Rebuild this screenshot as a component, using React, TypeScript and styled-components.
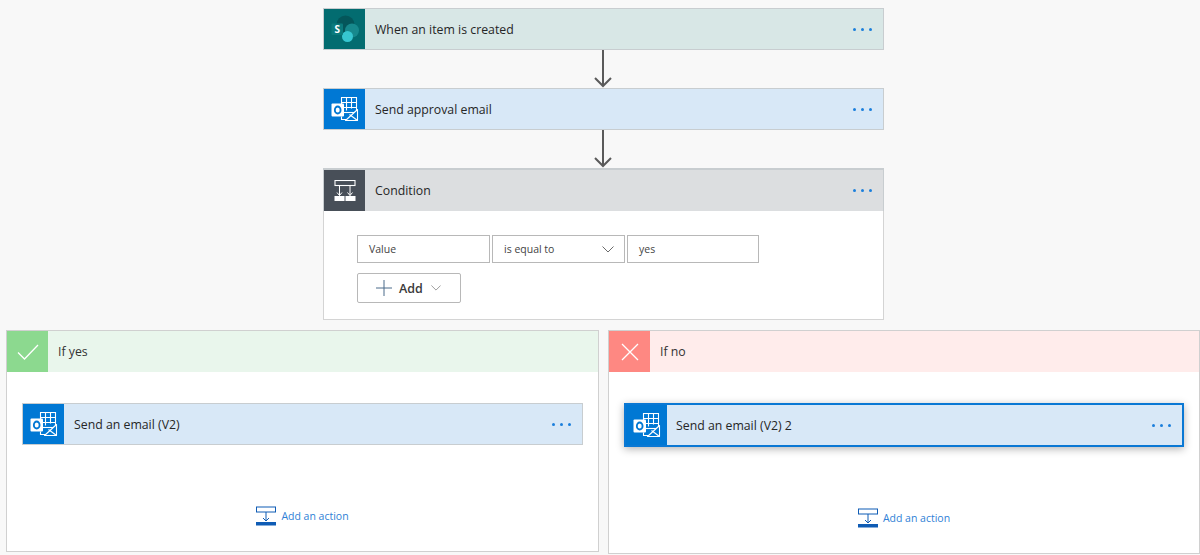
import type { ReactNode } from 'react';
import { createGlobalStyle, styled } from 'styled-components';

const GlobalStyle = createGlobalStyle`
  html, body {
    margin: 0;
    padding: 0;
    background: #f8f8f8;
    font-family: "Open Sans", "Noto Sans", sans-serif;
  }
`;

const Page = styled.div`
  width: 1200px;
  height: 555px;
  overflow: hidden;
  padding: 8px 0 0 6px;
  box-sizing: border-box;
`;

const Flow = styled.div`
  width: 561px;
  margin-left: 317px;
`;

const ArrowRow = styled.div`
  height: 38px;
  display: flex;
  justify-content: center;
`;

const CardBox = styled.div<{ $tint: string; $selected?: boolean; $tall?: boolean }>`
  display: flex;
  align-items: stretch;
  height: ${(p) => (p.$selected ? 44 : p.$tall ? 43 : 42)}px;
  box-sizing: border-box;
  background: ${(p) => p.$tint};
  border: ${(p) => (p.$selected ? '2px solid #0a78d4' : '1px solid #c8cdd0')};
  border-top-width: ${(p) => (p.$selected || p.$tall ? 2 : 1)}px;
  border-bottom-width: ${(p) => (p.$tall ? 0 : p.$selected ? 2 : 1)}px;
  box-shadow: ${(p) => (p.$selected ? '0 2px 8px rgba(0, 0, 0, 0.3)' : 'none')};
`;

const CardIcon = styled.div<{ $bg: string }>`
  width: 41px;
  flex: none;
  display: flex;
  align-items: center;
  justify-content: center;
  background: ${(p) => p.$bg};
`;

const CardTitle = styled.div<{ $selected?: boolean }>`
  flex: 1;
  display: flex;
  align-items: center;
  padding-left: ${(p) => (p.$selected ? 9 : 10)}px;
  font-size: 12.3px;
  color: #262626;
`;

const Dots = styled.div`
  display: flex;
  align-items: center;
  gap: 5px;
  padding-right: 11px;
  i {
    width: 3px;
    height: 3px;
    background: #1b7fdc;
    border-radius: 50%;
  }
`;

const ConditionBody = styled.div`
  height: 109px;
  box-sizing: border-box;
  padding: 24px 33px 0;
  background: #fff;
  border: 1px solid #d4d4d4;
  border-top: none;
`;

const Fields = styled.div`
  display: flex;
  gap: 2px;
`;

const Field = styled.div<{ $raised?: boolean }>`
  width: 133px;
  height: 28px;
  box-sizing: border-box;
  border: 1px solid #b8b8b8;
  background: #fff;
  display: flex;
  align-items: center;
  justify-content: space-between;
  padding: 0 10px ${(p) => (p.$raised ? 1 : 0)}px 11px;
  font-size: 10.5px;
  color: #444;
  &:last-child {
    width: 132px;
  }
`;

const AddButton = styled.div`
  width: 104px;
  height: 30px;
  margin-top: 10px;
  box-sizing: border-box;
  border: 1px solid #b8b8b8;
  border-radius: 2px;
  display: flex;
  align-items: center;
  gap: 7px;
  padding-left: 18px;
  font-size: 12.5px;
  font-weight: 600;
  color: #3a3a3a;
  svg:last-child {
    margin-left: 1px;
  }
`;

const Branches = styled.div`
  display: flex;
  align-items: flex-start;
  gap: 9px;
  margin-top: 10px;
`;

const Branch = styled.div<{ $width: number; $height: number }>`
  width: ${(p) => p.$width}px;
  height: ${(p) => p.$height}px;
  box-sizing: border-box;
  background: #fff;
  border: 1px solid #d0d0d0;
`;

const BranchHead = styled.div<{ $tint: string }>`
  display: flex;
  height: 41px;
  background: ${(p) => p.$tint};
`;

const BranchIcon = styled.div<{ $bg: string }>`
  width: 41px;
  display: flex;
  align-items: center;
  justify-content: center;
  background: ${(p) => p.$bg};
`;

const BranchTitle = styled.div`
  display: flex;
  align-items: center;
  padding-left: 10px;
  font-size: 12.3px;
  color: #333;
`;

const BranchBody = styled.div`
  padding: 31px 15px 0;
`;

const AddActionLink = styled.div`
  display: flex;
  align-items: center;
  justify-content: center;
  gap: 5px;
  margin-top: 61px;
  font-size: 10.5px;
  color: #2f7fd6;
`;

const OutlookIcon = () => (
  <svg width="28" height="24" viewBox="0 0 28 24" fill="none" stroke="#fff" strokeWidth="1.1">
    <rect x="10.5" y="0.5" width="15" height="15" />
    <path d="M15.5 0.5v13M20.5 0.5v11M10.5 5.5h15M12.5 10.5h13M10.500 19.500v3h5" />
    <path d="M14.500 23.500h12V12.500l-6.500 6z" strokeLinejoin="round" fill="#0078d4" />
    <path d="M18.500 17.500l8 6" />
    <rect x="0.500" y="6.500" width="12.500" height="13" rx="1" fill="#fff" stroke="none" />
    <ellipse cx="6.700" cy="13" rx="2.900" ry="3.500" stroke="#0078d4" strokeWidth="1.800" />
  </svg>
);

const SharePointIcon = () => (
  <svg width="28" height="28" viewBox="0 0 28 28">
    <circle cx="14.500" cy="9.500" r="9" fill="#04565a" />
    <circle cx="21" cy="15.500" r="7" fill="#17898d" />
    <circle cx="16.500" cy="21.500" r="5.500" fill="#37c6d0" />
    <rect x="0.500" y="8.500" width="11.500" height="11.500" rx="1" fill="#0b7a7c" />
    <text x="6.300" y="18" textAnchor="middle" fill="#fff" fontSize="10" fontWeight="700" fontFamily="Open Sans, sans-serif">
      S
    </text>
  </svg>
);

const ConditionIcon = () => (
  <svg width="22" height="22" viewBox="0 0 22 22" fill="none" stroke="#fff">
    <rect x="1" y="0.500" width="20" height="5" strokeWidth="1.100" />
    <path d="M5.500 5.500v10M16 5.500v10M3 12.500l2.500 3 2.500-3M13.500 12.500l2.500 3 2.500-3" strokeWidth="1" />
    <rect x="0.500" y="16" width="10" height="5" fill="#fff" stroke="none" />
    <rect x="11.500" y="16" width="10" height="5" fill="#fff" stroke="none" />
  </svg>
);

const ArrowIcon = () => (
  <svg width="20" height="38" viewBox="0 0 20 38" fill="none" stroke="#5a5a5a">
    <path d="M9 0v36" strokeWidth="2" />
    <path d="M1 28l8 8 8-8" strokeWidth="2" />
  </svg>
);

const AddActionIcon = () => (
  <svg width="20" height="20" viewBox="0 0 20 20" fill="none" stroke="#0f5cb5">
    <rect x="0.500" y="1" width="19" height="5" strokeWidth="1" />
    <path d="M10 6v9M7 12l3 3 3-3" strokeWidth="1" />
    <rect x="0" y="16" width="20" height="3.500" fill="#0f5cb5" stroke="none" />
  </svg>
);

const Chevron = ({ size, color }: { size: number; color: string }) => (
  <svg width={size} height={size / 2 + 1} viewBox="0 0 12 7" fill="none" stroke={color} strokeWidth="1">
    <path d="M0.500 0.500L6 6l5.500-5.500" />
  </svg>
);

const Card = ({
  icon,
  title,
  tint = '#d8e8f7',
  iconBg = '#0078d4',
  selected,
  tall,
}: {
  icon: ReactNode;
  title: string;
  tint?: string;
  iconBg?: string;
  selected?: boolean;
  tall?: boolean;
}) => (
  <CardBox $tint={tint} $selected={selected} $tall={tall}>
    <CardIcon $bg={iconBg}>{icon}</CardIcon>
    <CardTitle $selected={selected}>{title}</CardTitle>
    <Dots>
      <i />
      <i />
      <i />
    </Dots>
  </CardBox>
);

const AddAction = () => (
  <AddActionLink>
    <AddActionIcon />
    <span>Add an action</span>
  </AddActionLink>
);

export default function App() {
  return (
    <Page>
      <GlobalStyle />
      <Flow>
        <Card icon={<SharePointIcon />} title="When an item is created" tint="#d8e7e6" iconBg="#036c70" />
        <ArrowRow>
          <ArrowIcon />
        </ArrowRow>
        <Card icon={<OutlookIcon />} title="Send approval email" />
        <ArrowRow>
          <ArrowIcon />
        </ArrowRow>
        <Card icon={<ConditionIcon />} title="Condition" tint="#dcdee0" iconBg="#484f58" tall />
        <ConditionBody>
          <Fields>
            <Field $raised>Value</Field>
            <Field>
              is equal to
              <Chevron size={12} color="#6b6b6b" />
            </Field>
            <Field>yes</Field>
          </Fields>
          <AddButton>
            <svg width="16" height="16" viewBox="0 0 16 16" stroke="#4a6a8a" strokeWidth="1">
              <path d="M8 0v16M0 8h16" />
            </svg>
            Add
            <Chevron size={10} color="#8a8a8a" />
          </AddButton>
        </ConditionBody>
      </Flow>
      <Branches>
        <Branch $width={593} $height={222}>
          <BranchHead $tint="#e9f6ec">
            <BranchIcon $bg="#8cd98f">
              <svg width="22" height="16" viewBox="0 0 22 16" fill="none" stroke="#fff" strokeWidth="1.3">
                <path d="M1 8.500L7.500 15 21 1" />
              </svg>
            </BranchIcon>
            <BranchTitle>If yes</BranchTitle>
          </BranchHead>
          <BranchBody>
            <Card icon={<OutlookIcon />} title="Send an email (V2)" />
            <AddAction />
          </BranchBody>
        </Branch>
        <Branch $width={592} $height={224}>
          <BranchHead $tint="#ffeceb">
            <BranchIcon $bg="#fe8882">
              <svg width="18" height="18" viewBox="0 0 18 18" fill="none" stroke="#fff" strokeWidth="1.3">
                <path d="M1 1l16 16M17 1L1 17" />
              </svg>
            </BranchIcon>
            <BranchTitle>If no</BranchTitle>
          </BranchHead>
          <BranchBody>
            <Card icon={<OutlookIcon />} title="Send an email (V2) 2" selected />
            <AddAction />
          </BranchBody>
        </Branch>
      </Branches>
    </Page>
  );
}
